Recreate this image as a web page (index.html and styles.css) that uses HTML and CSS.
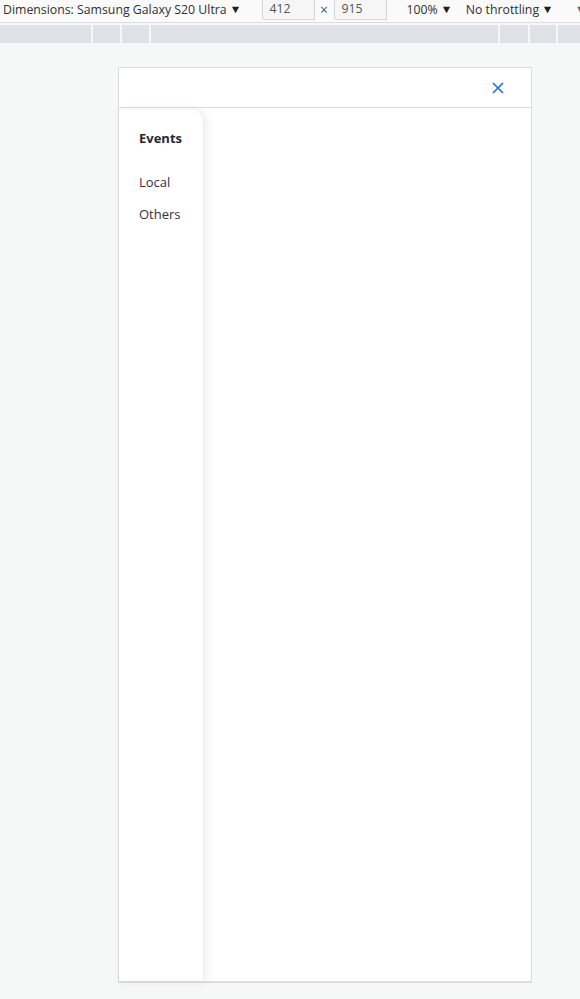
FILE: index.html
```html
<!DOCTYPE html>
<html>
<head>
<meta charset="utf-8">
<link rel="stylesheet" href="styles.css">
</head>
<body>
<div class="toolbar">
  <span class="dim">Dimensions: Samsung Galaxy S20 Ultra</span><span class="caret">▼</span>
  <span class="box w">412</span>
  <span class="times">×</span>
  <span class="box h">915</span>
  <span class="zoomv">100%</span><span class="caret">▼</span>
  <span class="throt">No throttling</span><span class="caret">▼</span>
  <span class="more">▼</span>
</div>
<div class="ruler">
  <div class="seg s1"></div><div class="seg s2"></div><div class="seg s3"></div><div class="seg s4"></div><div class="seg s5"></div><div class="seg s6"></div><div class="seg s7"></div>
</div>
<div class="stage">
  <div class="device">
    <div class="dhead">
      <svg class="close" width="12" height="12" viewBox="0 0 12 12"><path d="M1 1L11 11M11 1L1 11" stroke="#1a6fd6" stroke-width="1.6" fill="none"/></svg>
    </div>
    <div class="dbody">
      <nav class="side">
        <div class="side-title">Events</div>
        <div class="side-item">Local</div>
        <div class="side-item">Others</div>
      </nav>
      <main class="content"></main>
    </div>
  </div>
</div>
</body>
</html>
```
FILE: styles.css
```css
html, body { margin: 0; padding: 0; }
body {
  width: 580px;
  height: 999px;
  overflow: hidden;
  background: #f6f7f7;
  font-family: "Open Sans", "Liberation Sans", sans-serif;
}
.toolbar {
  height: 22px;
  background: #fafafa;
  border-bottom: 1px solid #dcdde0;
  display: flex;
  align-items: flex-start;
  font-size: 12.3px;
  color: #303030;
  white-space: nowrap;
  overflow: hidden;
}
.toolbar > * { flex: none; }
.dim { margin-left: 3px; line-height: 19px; }
.caret { font-size: 11px; line-height: 17px; margin-left: 3px; color: #1e1e1e; transform: scaleX(1.1); }
.box {
  box-sizing: border-box;
  width: 53px;
  height: 20px;
  border: 1px solid #d6d6d6;
  border-top: none;
  background: #f6f6f6;
  color: #555;
  padding-left: 7px;
  line-height: 18px;
}
.box.w { margin-left: 21px; }
.times { color: #1a5fb0; width: 19px; text-align: center; line-height: 19px; font-size: 14px; }
.zoomv { margin-left: 20px; line-height: 19px; }
.throt { margin-left: 14px; line-height: 19px; }
.more { margin-left: 22px; font-size: 11px; line-height: 17px; color: #666; }
.ruler {
  margin-top: 2px;
  height: 18px;
  display: flex;
  gap: 2px;
}
.seg { background: #dee1e6; height: 100%; flex: none; }
.s1 { width: 91px; }
.s2 { width: 27px; }
.s3 { width: 27px; }
.s4 { width: 347px; }
.s5 { width: 28px; }
.s6 { width: 26px; }
.s7 { flex: 1; }
.stage {
  padding-top: 24px;
  padding-left: 118px;
}
.device {
  box-sizing: border-box;
  width: 414px;
  height: 916px;
  background: #fff;
  border: 1px solid #dedede;
  border-bottom-width: 2px;
  display: flex;
  flex-direction: column;
}
.dhead {
  height: 39px;
  border-bottom: 1px solid #dcdcdc;
  display: flex;
  align-items: center;
  justify-content: flex-end;
  padding-right: 27px;
  flex: none;
}
.close { display: block; margin-top: 1px; }
.dbody {
  flex: 1;
  display: flex;
  padding-top: 2px;
  min-height: 0;
}
.side {
  width: 85px;
  flex: none;
  background: #fff;
  border-radius: 0 12px 0 0;
  box-shadow: 2px 0 10px rgba(40, 40, 80, 0.09);
  border-right: 1px solid #eeeef2;
  padding: 19px 0 0 20px;
  box-sizing: border-box;
  color: #282b3a;
  position: relative;
  z-index: 1;
}
.side-title {
  font-weight: 700;
  font-size: 13px;
  line-height: 18px;
  color: #252838;
  margin-bottom: 26px;
}
.side-item {
  font-size: 13px;
  line-height: 18px;
  margin-bottom: 14px;
  color: #2f3242;
}
.content { flex: 1; }
```
